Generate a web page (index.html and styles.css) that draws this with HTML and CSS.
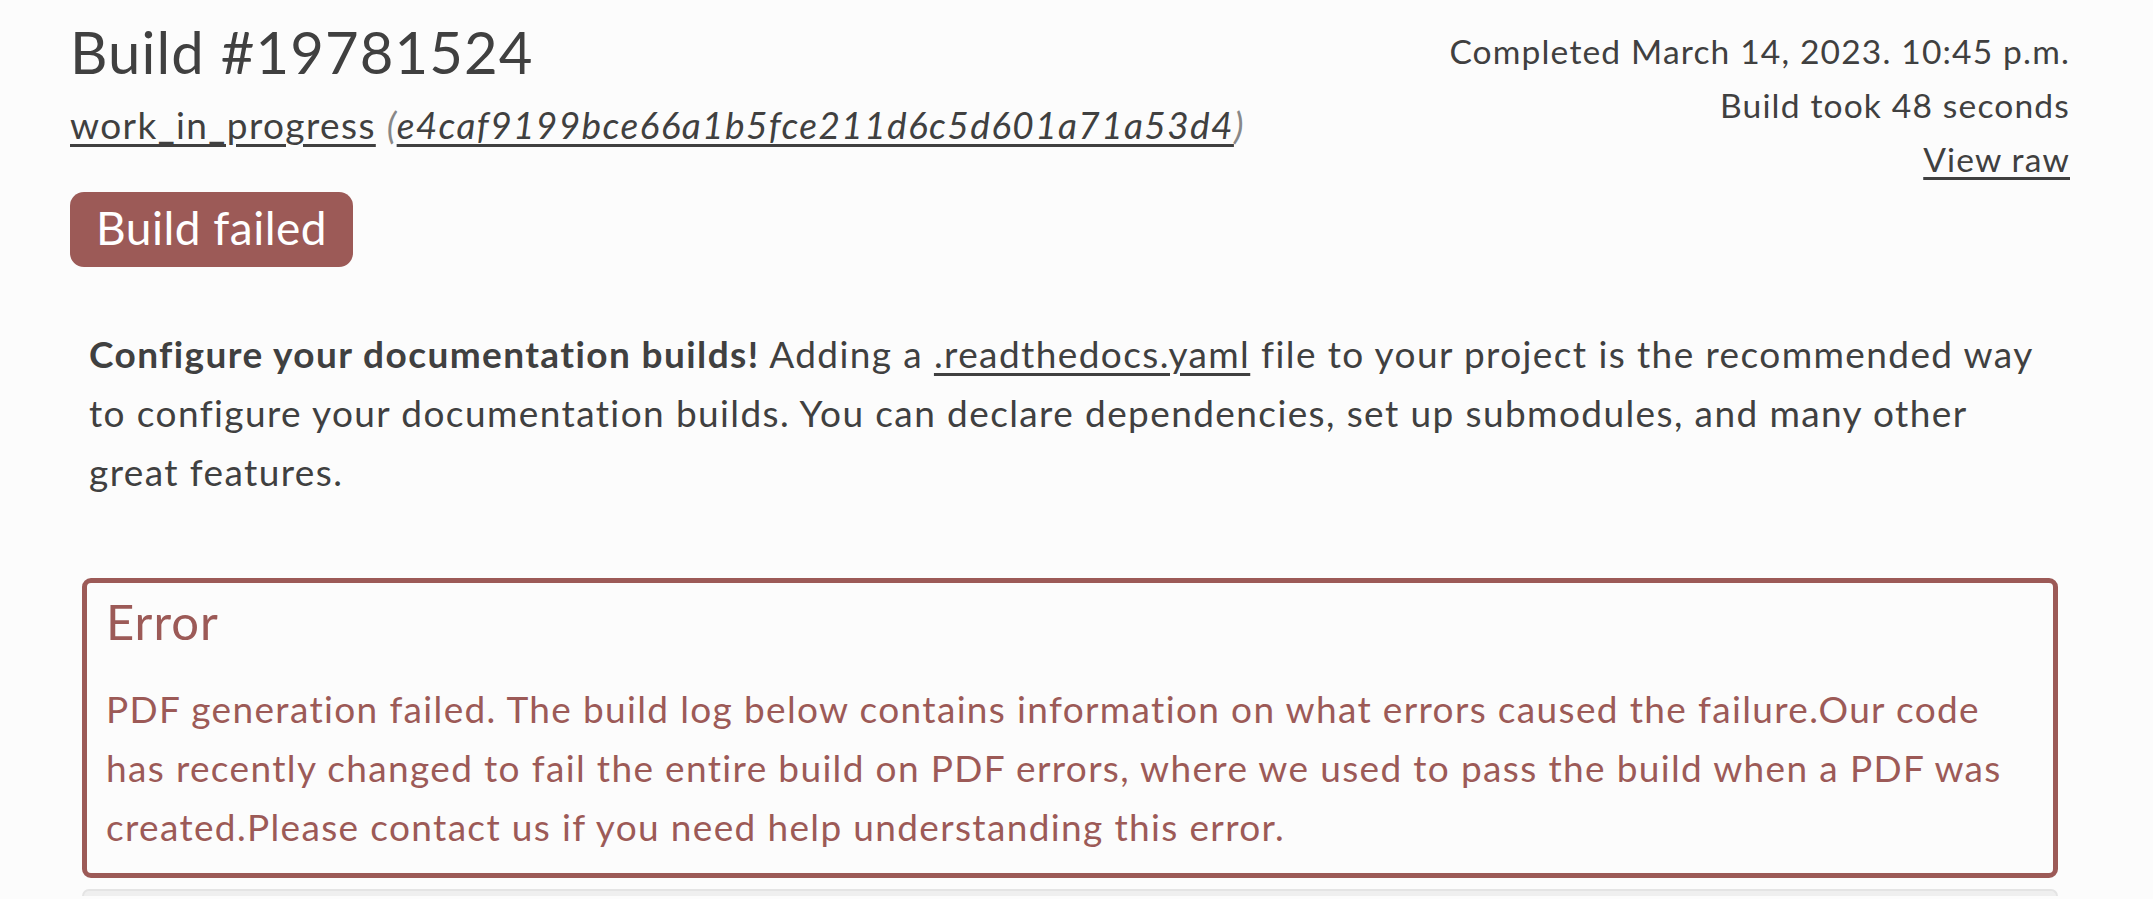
FILE: index.html
```html
<!DOCTYPE html>
<html lang="en">
<head>
<meta charset="utf-8">
<title>Build #19781524</title>
<link rel="stylesheet" href="styles.css">
</head>
<body>
<div class="page">
  <header class="build-header">
    <div class="build-id">
      <h1 class="build-title">Build #19781524</h1>
      <div class="build-ref"><a href="#" class="ref-link">work_in_progress</a> <span class="commit"><span class="paren">(</span><a href="#" class="ref-link">e4caf9199bce66a1b5fce211d6c5d601a71a53d4</a><span class="paren">)</span></span></div>
      <div class="status-row"><span class="badge">Build failed</span></div>
    </div>
    <div class="build-meta">
      <div>Completed March 14, 2023. 10:45 p.m.</div>
      <div>Build took 48 seconds</div>
      <div><a href="#" class="ref-link">View raw</a></div>
    </div>
  </header>

  <p class="config-note"><strong>Configure your documentation builds!</strong> Adding a <a href="#" class="ref-link">.readthedocs.yaml</a> file to your project is the recommended way to configure your documentation builds. You can declare dependencies, set up submodules, and many other great features.</p>

  <div class="error-box">
    <h2 class="error-title">Error</h2>
    <p class="error-text">PDF generation failed. The build log below contains information on what errors caused the failure.Our code has recently changed to fail the entire build on PDF errors, where we used to pass the build when a PDF was created.Please contact us if you need help understanding this error.</p>
  </div>

  <div class="log-box"></div>
</div>
</body>
</html>
```

FILE: styles.css
```css
html, body {
  margin: 0;
  padding: 0;
  background: #fcfcfc;
}

body {
  font-family: Lato, "Noto Sans", "Liberation Sans", sans-serif;
  color: #404040;
  font-size: 37px;
  line-height: 59px;
  letter-spacing: 1.4px;
  overflow: hidden;
}

.page {
  padding: 17px 83px 0 70px;
}

.build-header {
  display: flex;
  justify-content: space-between;
  align-items: flex-start;
}

.build-title {
  margin: 0;
  font-size: 58px;
  line-height: 70px;
  font-weight: 400;
  letter-spacing: 1.1px;
}

.build-ref {
  margin-top: 8px;
}

.ref-link {
  color: #404040;
  text-decoration: underline;
  text-decoration-thickness: 3px;
  text-underline-offset: 5px;
}

.commit {
  font-style: italic;
}

.paren {
  color: #888;
}

.build-meta {
  margin-top: 7px;
  font-size: 33.6px;
  line-height: 54px;
  letter-spacing: 1.15px;
  text-align: right;
}

.status-row {
  margin-top: 38px;
  display: flex;
}

.badge {
  background: #9c5a57;
  color: #ffffff;
  font-size: 46px;
  line-height: 55px;
  letter-spacing: 0.5px;
  padding: 8px 26px 12px;
  border-radius: 14px;
}

.config-note {
  margin: 57px 19px 0;
}

.config-note strong {
  font-weight: 700;
}

.error-box {
  margin: 77px 12px 0;
  border: 5px solid #9c5a57;
  border-radius: 9px;
  padding: 9px 19px 17px;
  color: #9c5a57;
}

.error-title {
  margin: 0;
  font-size: 49px;
  line-height: 59px;
  font-weight: 400;
  letter-spacing: 1px;
}

.error-text {
  margin: 28px 0 0;
  letter-spacing: 1.35px;
}

.log-box {
  margin: 11px 12px 0;
  height: 5px;
  background: #efefef;
  border: 2px solid #e4e4e4;
  border-bottom: none;
  border-radius: 9px 9px 0 0;
}
```
